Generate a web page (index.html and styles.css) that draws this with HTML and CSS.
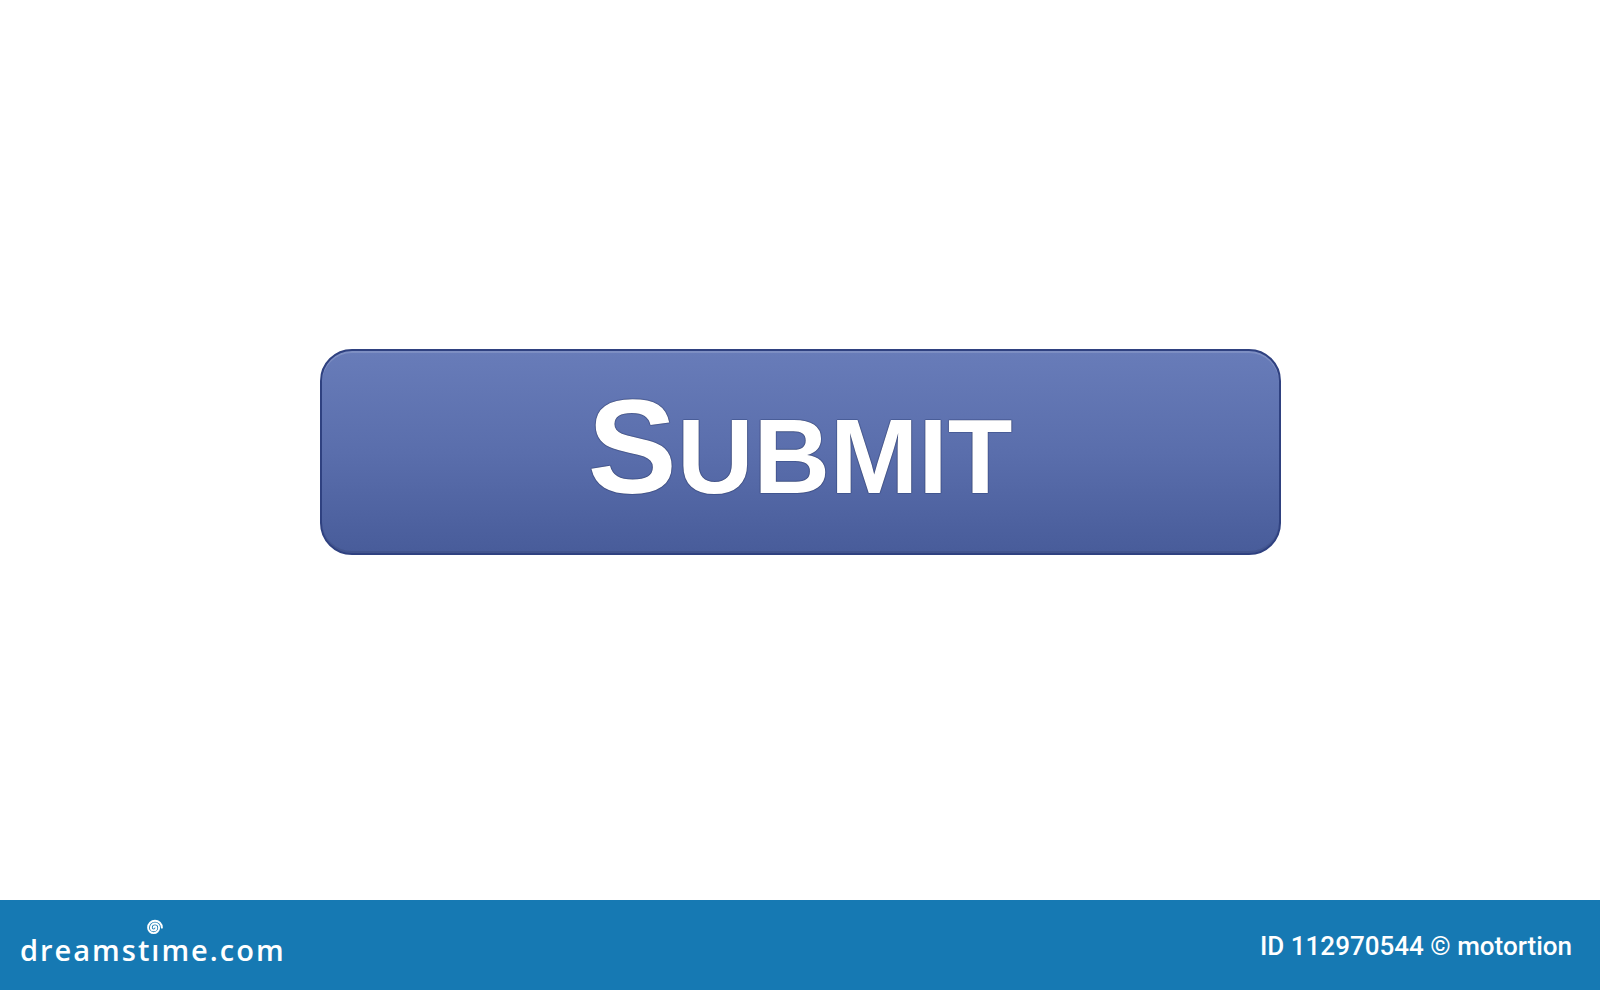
FILE: index.html
```html
<!DOCTYPE html>
<html lang="en">
<head>
  <meta charset="UTF-8">
  <meta name="viewport" content="width=device-width, initial-scale=1.0">
  <title>Submit Button</title>
  <link rel="stylesheet" href="styles.css">
</head>
<body>
  <main class="stage">
    <button type="submit" class="web-btn">
      <span class="btn-initial">S</span><span class="btn-rest">ubmit</span>
    </button>
  </main>

  <footer class="credit-bar">
    <div class="site-logo">dreamst<span class="logo-i">ı<svg class="logo-swirl" viewBox="0 0 16 16" width="22" height="22"><path d="M7 7a1 1 0 0 1 2 0a2 2 0 0 1-4 0a3 3 0 0 1 6 0a4 4 0 0 1-8 0a5 5 0 0 1 10 0" fill="none" stroke="#fff" stroke-width="1.4" stroke-linecap="round"/></svg></span>me.com</div>
    <p class="photo-id">ID 112970544 &copy; motortion</p>
  </footer>
</body>
</html>
```

FILE: styles.css
```css
/* ===== Base ===== */
:root {
  --btn-top: #687cb9;
  --btn-bottom: #485c9a;
  --btn-edge: #2f4180;
  --bar: #1679b3;
  --text-light: #ffffff;
}

* {
  margin: 0;
  padding: 0;
  box-sizing: border-box;
}

body {
  background: #ffffff;
  width: 1600px;
  height: 990px;
  display: flex;
  flex-direction: column;
  font-family: 'Liberation Sans', Arial, sans-serif;
  overflow: hidden;
}

/* ===== Button area ===== */
.stage {
  height: 900px;
  display: flex;
  justify-content: center;
  align-items: center;
  padding-top: 4px;
}

.web-btn {
  width: 961px;
  height: 206px;
  border: 2px solid var(--btn-edge);
  border-radius: 32px;
  background: linear-gradient(to bottom, var(--btn-top) 0%, #5a6eac 50%, var(--btn-bottom) 100%);
  box-shadow: inset 0 2px 0 rgba(255,255,255,0.15), inset 0 -2px 0 rgba(0,0,0,0.08);
  color: var(--text-light);
  font-family: 'Liberation Sans', Arial, sans-serif;
  font-weight: bold;
  line-height: 1;
  cursor: pointer;
  display: flex;
  justify-content: center;
  align-items: baseline;
  padding-top: 29px;
  text-shadow: 0 0 1px #1d2b5a, 0 0 1px #1d2b5a, 0 0 1px #1d2b5a;
}

.btn-initial {
  font-size: 134px;
}

.btn-rest {
  font-size: 106px;
  text-transform: uppercase;
}

/* ===== Credit bar ===== */
.credit-bar {
  height: 90px;
  background: var(--bar);
  color: var(--text-light);
  display: flex;
  justify-content: space-between;
  align-items: center;
  padding: 0 28px 0 20px;
}

.site-logo {
  font-family: 'Open Sans', sans-serif;
  font-size: 29px;
  font-weight: 600;
  letter-spacing: 2px;
  margin-top: 8px;
}

.logo-i {
  position: relative;
}

.logo-swirl {
  position: absolute;
  left: -7px;
  top: -12px;
}

.photo-id {
  font-family: Roboto, sans-serif;
  font-size: 26px;
  font-weight: 500;
  margin-top: 2px;
}
```
